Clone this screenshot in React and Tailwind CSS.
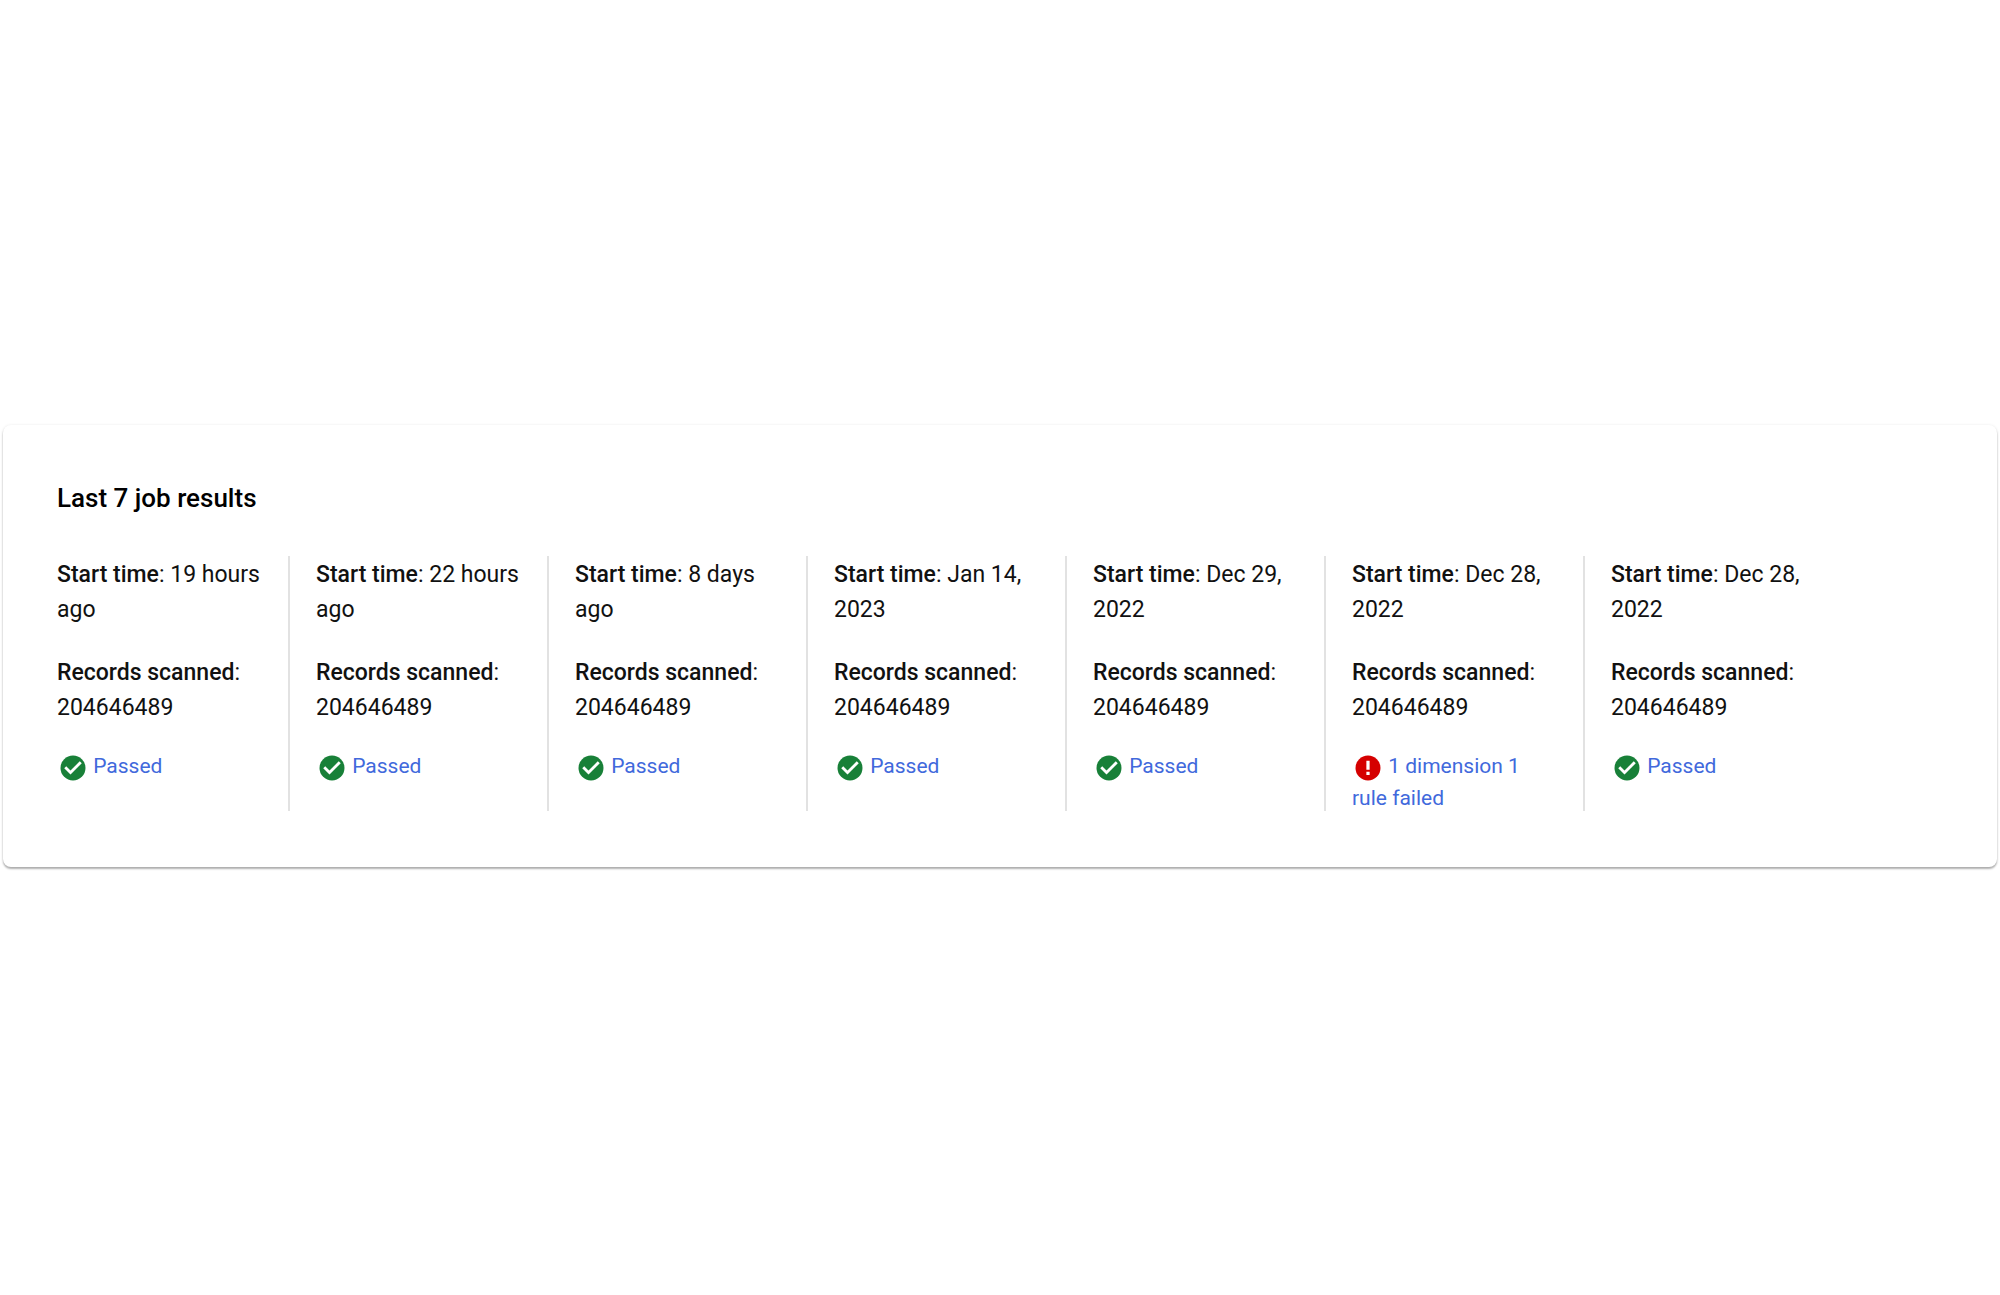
import React from 'react';

const jobs = [
  { id: 1, startTime: '19 hours ago', records: '204646489' },
  { id: 2, startTime: '22 hours ago', records: '204646489' },
  { id: 3, startTime: '8 days ago', records: '204646489' },
  { id: 4, startTime: 'Jan 14, 2023', records: '204646489' },
  { id: 5, startTime: 'Dec 29, 2022', records: '204646489' },
  { id: 6, startTime: 'Dec 28, 2022', records: '204646489', failure: '1 dimension 1 rule failed' },
  { id: 7, startTime: 'Dec 28, 2022', records: '204646489' },
];

function PassedIcon() {
  return (
    <svg viewBox="0 0 24 24" className="inline-block h-[30px] w-[30px]" aria-hidden="true">
      <circle cx="12" cy="12" r="10" fill="#188038" />
      <path d="M10 17.2l-5-5 1.6-1.6L10 14l7.4-7.4L19 8.2z" fill="#fff" />
    </svg>
  );
}

function FailedIcon() {
  return (
    <svg viewBox="0 0 24 24" className="inline-block h-[30px] w-[30px]" aria-hidden="true">
      <circle cx="12" cy="12" r="10" fill="#d50000" />
      <path d="M10.7 6.2h2.6v7.2h-2.6zM10.7 15h2.6v2.6h-2.6z" fill="#fff" />
    </svg>
  );
}

function JobResult({ job }) {
  return (
    <li className="border-r-2 border-[#e2e2e2] pt-px pl-[26px] first:pl-0 last:border-r-0">
      <p className="pr-4 leading-[35px]">
        <strong className="font-medium">Start time</strong>: {job.startTime}
      </p>
      <p className="mt-7 pr-4 leading-[35px]">
        <strong className="font-medium">Records scanned</strong>: {job.records}
      </p>
      <p className="mt-[26px] -mb-[3px] pr-10 text-[21px] leading-[31px]">
        <a href="#" className="text-[#4169dc] hover:underline">
          <span className="pl-px">{job.failure ? <FailedIcon /> : <PassedIcon />}</span>{' '}
          {job.failure || 'Passed'}
        </a>
      </p>
    </li>
  );
}

export default function App() {
  return (
    <main className="flex min-h-screen items-center bg-white px-[3px] pb-[3px] font-[Roboto,sans-serif] text-[23px] text-[#111111]">
      <section className="w-full rounded-lg bg-white pt-[55px] pr-[153px] pb-14 pl-[54px] shadow-[0_2px_2px_rgba(0,0,0,0.3),0_0_3px_rgba(0,0,0,0.08)]">
        <h2 className="text-[26px] leading-9 font-medium text-black">Last 7 job results</h2>
        <ul className="mt-10 grid grid-cols-[233fr_repeat(6,259fr)]">
          {jobs.map((job) => (
            <JobResult key={job.id} job={job} />
          ))}
        </ul>
      </section>
    </main>
  );
}
